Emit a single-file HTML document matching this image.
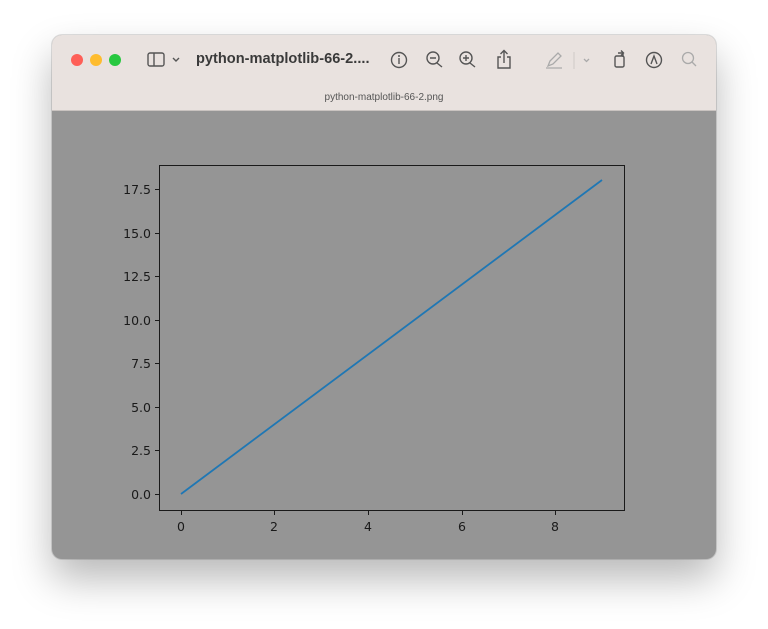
<!DOCTYPE html>
<html><head><style>
html,body{margin:0;padding:0;background:#fff;width:768px;height:629px;overflow:hidden}
.win{position:absolute;left:52px;top:35px;width:664px;height:524px;border-radius:10px;background:#959595;overflow:hidden;box-shadow:0 20px 40px rgba(0,0,0,0.28),0 0 0 1px rgba(0,0,0,0.12)}
.bar{position:absolute;left:0;top:0;width:664px;height:75px;background:#e9e2df;border-bottom:1px solid #c9c3c0}
.t{position:absolute;font-family:"Liberation Sans",sans-serif}
</style></head><body>
<div class="win">
<div class="bar">
<svg width="664" height="75" style="position:absolute;left:0;top:0">
<circle cx="25" cy="25" r="6" fill="#fe5f57"/><circle cx="44" cy="25" r="6" fill="#febc2e"/><circle cx="63" cy="25" r="6" fill="#28c840"/>
<g fill="none" stroke="#555" stroke-width="1.4">
<rect x="96" y="18" width="16" height="13" rx="2"/><line x1="102" y1="18" x2="102" y2="31"/>
<path d="M121 23l3 3 3-3"/>
<circle cx="347" cy="25" r="7.5"/><line x1="347" y1="23" x2="347" y2="29"/>
<circle cx="381" cy="23" r="6"/><line x1="385" y1="28" x2="390" y2="32"/><line x1="378" y1="23" x2="384" y2="23"/>
<circle cx="414" cy="23" r="6"/><line x1="418" y1="28" x2="423" y2="32"/><line x1="411" y1="23" x2="417" y2="23"/><line x1="414" y1="20" x2="414" y2="26"/>
<path d="M449 22h-3v11h12v-11h-3M452 28v-12M448.5 19l3.5-3.5 3.5 3.5"/>
<rect x="563" y="21" width="9" height="11" rx="1.5"/><path d="M566 18h5v4M569 15.5l2.5 2.5-2.5 2.5"/>
<circle cx="602" cy="25" r="7.5"/><path d="M599 29l3-8 3 8"/>
</g>
<g fill="none" stroke="#aaa" stroke-width="1.3">
<path d="M496 31l2-5 8-8 3 3-8 8-5 2zM494 33h16"/>
<path d="M532 24l2.5 2.5 2.5-2.5"/>
<line x1="522" y1="17" x2="522" y2="34" stroke="#d5d0cd"/>
<circle cx="636" cy="23" r="5.5"/><line x1="640" y1="27" x2="644" y2="31"/>
</g>
<circle cx="347" cy="21" r="1" fill="#555"/>
</svg>
<div class="t" style="left:144px;top:16px;font-size:14.6px;font-weight:bold;color:#3a3a3a">python-matplotlib-66-2....</div>
<div class="t" style="left:0;width:664px;text-align:center;top:57px;font-size:10px;color:#555">python-matplotlib-66-2.png</div>
</div>
</div>
<svg width="768" height="629" style="position:absolute;left:0;top:0" font-family="DejaVu Sans, Liberation Sans, sans-serif" font-size="12.5" fill="#1a1a1a">
<rect x="159.5" y="165.5" width="465" height="345" fill="none" stroke="#1a1a1a" stroke-width="1"/>
<polyline points="181,494 602,180" stroke="#1f77b4" stroke-width="1.8" fill="none"/>
<g stroke="#1a1a1a" stroke-width="1">
<line x1="155" y1="189.5" x2="159" y2="189.5"/><line x1="155" y1="233.5" x2="159" y2="233.5"/><line x1="155" y1="276.5" x2="159" y2="276.5"/><line x1="155" y1="320.5" x2="159" y2="320.5"/><line x1="155" y1="363.5" x2="159" y2="363.5"/><line x1="155" y1="407.5" x2="159" y2="407.5"/><line x1="155" y1="450.5" x2="159" y2="450.5"/><line x1="155" y1="494.5" x2="159" y2="494.5"/>
<line x1="181.5" y1="511" x2="181.5" y2="515"/><line x1="274.5" y1="511" x2="274.5" y2="515"/><line x1="368.5" y1="511" x2="368.5" y2="515"/><line x1="462.5" y1="511" x2="462.5" y2="515"/><line x1="555.5" y1="511" x2="555.5" y2="515"/>
</g>
<g text-anchor="end">
<text x="151" y="194">17.5</text><text x="151" y="238">15.0</text><text x="151" y="281">12.5</text><text x="151" y="325">10.0</text><text x="151" y="368">7.5</text><text x="151" y="412">5.0</text><text x="151" y="455">2.5</text><text x="151" y="499">0.0</text>
</g>
<g text-anchor="middle">
<text x="181" y="531">0</text><text x="274" y="531">2</text><text x="368" y="531">4</text><text x="462" y="531">6</text><text x="555" y="531">8</text>
</g>
</svg>
</body></html>
